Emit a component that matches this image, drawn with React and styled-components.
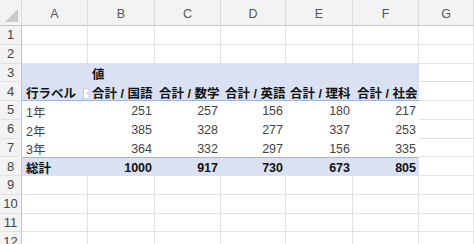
import styled, { createGlobalStyle } from "styled-components";

const GlobalStyle = createGlobalStyle`
  html, body {
    margin: 0;
    padding: 0;
    background: #ffffff;
  }
  body {
    font-family: "Liberation Sans", "Noto Sans CJK JP", sans-serif;
  }
`;

const columns = ["A", "B", "C", "D", "E", "F", "G"];

const subjects = ["国語", "数学", "英語", "理科", "社会"];

const rows = [
  { label: "1年", values: [251, 257, 156, 180, 217] },
  { label: "2年", values: [385, 328, 277, 337, 253] },
  { label: "3年", values: [364, 332, 297, 156, 335] },
];

const totals = [1000, 917, 730, 673, 805];

const App = () => {
  return (
    <>
      <GlobalStyle />
      <Sheet>
        <Corner>
          <CornerMark />
        </Corner>
        {columns.map((c) => (
          <ColHead key={c}>{c}</ColHead>
        ))}

        {[1, 2].map((r) => (
          <EmptyRow key={r} n={r} />
        ))}

        {/* pivot header: 値 */}
        <RowHead>3</RowHead>
        <Cell $kind="head" />
        <Cell $kind="head" $bold>値</Cell>
        {subjects.slice(1).map((s) => (
          <Cell key={s} $kind="head" />
        ))}
        <Cell />

        {/* pivot header: field names */}
        <RowHead>4</RowHead>
        <Cell $kind="headLast" $bold>
          <LabelWrap>
            行ラベル
            <Dropdown>
              <Caret />
            </Dropdown>
          </LabelWrap>
        </Cell>
        {subjects.map((s) => (
          <Cell key={s} $kind="headLast" $bold>
            合計 / {s}
          </Cell>
        ))}
        <Cell />

        {rows.map((row, i) => [
          <RowHead key={`h${i}`}>{5 + i}</RowHead>,
          <Cell key={`l${i}`} $kind="body">
            {row.label}
          </Cell>,
          ...row.values.map((v, j) => (
            <Cell key={`v${i}-${j}`} $kind="body" $num>
              {v}
            </Cell>
          )),
          <Cell key={`g${i}`} />,
        ])}

        <RowHead>8</RowHead>
        <Cell $kind="total" $bold>総計</Cell>
        {totals.map((v, j) => (
          <Cell key={j} $kind="total" $bold $num>
            {v}
          </Cell>
        ))}
        <Cell />

        {[9, 10, 11, 12].map((r) => (
          <EmptyRow key={r} n={r} />
        ))}
      </Sheet>
    </>
  );
};

const EmptyRow = ({ n }) => (
  <>
    <RowHead>{n}</RowHead>
    {columns.map((c) => (
      <Cell key={c} />
    ))}
  </>
);

const Sheet = styled.div`
  display: grid;
  grid-template-columns: 22px 66px 67px 66px 65px 67px 66px 1fr;
  grid-template-rows: 26px repeat(12, 18.75px);
  width: 474px;
  height: 244px;
  overflow: hidden;
  font-size: 12.5px;
`;

const Corner = styled.div`
  position: relative;
  background: #f3f3f3;
  border-right: 1px solid #d8d8d8;
  border-bottom: 1px solid #c6c6c6;
`;

const CornerMark = styled.div`
  position: absolute;
  right: 3px;
  bottom: 3px;
  width: 0;
  height: 0;
  border-left: 13px solid transparent;
  border-bottom: 13px solid #c9c9c9;
`;

const ColHead = styled.div`
  display: flex;
  align-items: center;
  justify-content: center;
  background: #f3f3f3;
  color: #555;
  font-size: 12.5px;
  border-right: 1px solid #dcdcdc;
  border-bottom: 1px solid #c6c6c6;
  padding-top: 3px;
`;

const RowHead = styled.div`
  display: flex;
  align-items: center;
  justify-content: center;
  background: #f3f3f3;
  color: #444;
  font-size: 13px;
  border-right: 1px solid #c6c6c6;
  border-bottom: 1px solid #e2e2e2;
  box-sizing: border-box;
`;

const fills = {
  head: "#d9e1f2",
  headLast: "#d9e1f2",
  total: "#d9e1f2",
  body: "#ffffff",
};

const bottoms = {
  head: "none",
  headLast: "1px solid #9fb4de",
  body: "none",
  total: "1px solid #e2e2e2",
};

const Cell = styled.div`
  display: flex;
  align-items: center;
  justify-content: ${(p) => (p.$num ? "flex-end" : "flex-start")};
  padding: 2px 3px 0 4px;
  box-sizing: border-box;
  white-space: nowrap;
  background: ${(p) => (p.$kind ? fills[p.$kind] : "#ffffff")};
  color: ${(p) => (p.$bold ? "#111" : "#444")};
  font-weight: ${(p) => (p.$bold ? 700 : 400)};
  border-right: ${(p) => (p.$kind ? "none" : "1px solid #e2e2e2")};
  border-bottom: ${(p) => (p.$kind ? bottoms[p.$kind] : "1px solid #e2e2e2")};
  border-top: ${(p) => (p.$kind === "total" ? "1px solid #9fb4de" : "none")};
`;

const LabelWrap = styled.div`
  display: flex;
  align-items: center;
  gap: 7px;
`;

const Dropdown = styled.span`
  display: inline-flex;
  align-items: center;
  justify-content: center;
  width: 11px;
  height: 11px;
  background: #ffffff;
  border: 1px solid #d0d0d0;
  box-sizing: border-box;
  margin-top: 3px;
`;

const Caret = styled.span`
  width: 0;
  height: 0;
  border-left: 2px solid transparent;
  border-right: 2px solid transparent;
  border-top: 2px solid #555;
`;

export default App;
